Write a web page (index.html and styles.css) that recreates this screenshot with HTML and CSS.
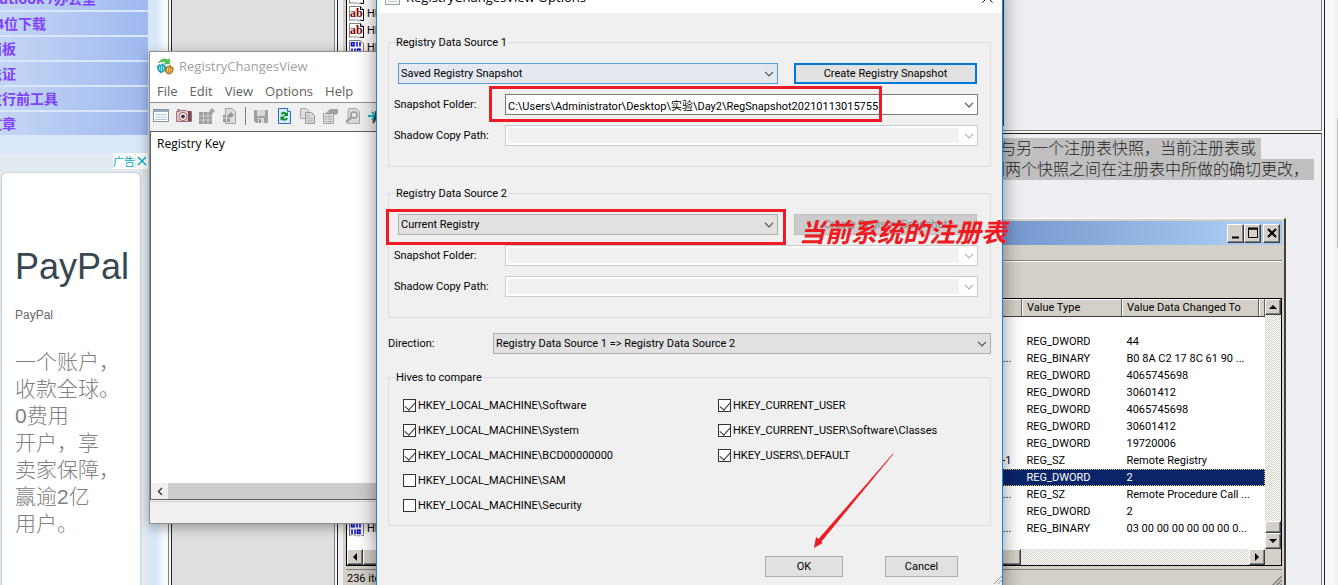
FILE: index.html
```
<!DOCTYPE html>
<html lang="zh-CN">
<head>
  <meta charset="UTF-8" />
  <meta name="viewport" content="width=device-width, initial-scale=1.0" />
  <title>RegistryChangesView</title>
  <link rel="stylesheet" href="styles.css">
</head>
<body>
  <svg width="0" height="0" class="defs">
    <symbol id="chevron" viewBox="0 0 10 6"><path d="M1 .8 5 4.8 9 .8" fill="none" stroke="currentColor" stroke-width="1.2"/></symbol>
    <symbol id="reg-ab" viewBox="0 0 16 16">
      <path d="M.5.5h11l3 3v11h-2l-1-1-2 1.500-2-1.500-2 1-2-1-3 1z" fill="#fff" stroke="#808080"/>
      <path d="M11.500.5v3h3v11h-3" fill="none" stroke="#000"/>
      <text x="1" y="11" font-size="12" font-weight="bold" font-family="Liberation Serif, serif" fill="#800000">ab</text>
    </symbol>
    <symbol id="reg-bin" viewBox="0 0 16 16">
      <path d="M.5.5h11l3 3v11h-2l-1-1-2 1.500-2-1.500-2 1-2-1-3 1z" fill="#fff" stroke="#808080"/>
      <g fill="none" stroke="#0000e0" stroke-width="1.500"><rect x="2.500" y="2.700" width="2.500" height="3"/><path d="M8 2v4.500M11 2v4.500M3 8.500V13M6 8.500V13"/><rect x="8.500" y="9.200" width="2.500" height="3"/></g>
    </symbol>
  </svg>

  <div class="page">
    <aside class="sidebar">
      <ul class="side-menu">
        <li><a href="#">Outlook /办公室</a></li>
        <li><a href="#">64位下载</a></li>
        <li><a href="#">面板</a></li>
        <li><a href="#">法证</a></li>
        <li><a href="#">发行前工具</a></li>
        <li><a href="#">文章</a></li>
      </ul>
      <div class="ad">
        <div class="ad-bar">
          <span>广告</span>
          <button type="button" aria-label="关闭"><svg viewBox="0 0 10 10" width="10" height="10"><path d="M1 1l8 8M9 1l-8 8" stroke="#00a8c8" stroke-width="1.300"/></svg></button>
        </div>
        <div class="ad-card">
          <h2>PayPal</h2>
          <small>PayPal</small>
          <p>一个账户，<br>收款全球。<br>0费用<br>开户，享<br>卖家保障，<br>赢逾2亿<br>用户。</p>
        </div>
      </div>
    </aside>
    <div class="gutter"></div>
    <main class="frame">
      <div class="nav-cell"></div>
      <div class="content">
        <section class="cell cell-top">
          <div class="classic classic-top">
            <div class="reg-list">
              <div class="reg-row"><svg width="16" height="16"><use href="#reg-ab"/></svg>HKEY</div>
              <div class="reg-row"><svg width="16" height="16"><use href="#reg-ab"/></svg>HKEY</div>
              <div class="reg-row"><svg width="16" height="16"><use href="#reg-ab"/></svg>HKEY</div>
              <div class="reg-row"><svg width="16" height="16"><use href="#reg-bin"/></svg>HKEY</div>
            </div>
          </div>
        </section>
        <section class="cell cell-bottom">
          <p class="article"><mark class="first">与另一个注册表快照，当前注册表或</mark><br><mark>到两个快照之间在注册表中所做的确切更改，</mark></p>
          <div class="classic classic-main">
            <div class="classic-title">
              <button type="button" aria-label="Minimize"><svg width="14" height="14"><path d="M3 11.500h7" stroke="#000" stroke-width="2"/></svg></button>
              <button type="button" aria-label="Maximize"><svg width="14" height="14"><path d="M2.500 2v9.500h9V2M2 3h10" fill="none" stroke="#000"/><path d="M2 2.500h10" stroke="#000" stroke-width="2"/></svg></button>
              <button type="button" aria-label="Close" class="close"><svg width="14" height="14"><path d="M3 3l8 8M11 3l-8 8" stroke="#000" stroke-width="2"/></svg></button>
            </div>
            <div class="classic-menu"></div>
            <div class="classic-tools"></div>
            <div class="list-box">
              <div class="list-area">
                <table class="list">
                  <thead>
                    <tr><th class="c-key"></th><th class="c-type">Value Type</th><th class="c-data">Value Data Changed To</th><th></th></tr>
                  </thead>
                  <tbody>
                    <tr><td></td><td></td><td></td><td></td></tr>
                    <tr><td></td><td>REG_DWORD</td><td>44</td><td></td></tr>
                    <tr><td>...</td><td>REG_BINARY</td><td>B0 8A C2 17 8C 61 90 ...</td><td></td></tr>
                    <tr><td></td><td>REG_DWORD</td><td>4065745698</td><td></td></tr>
                    <tr><td></td><td>REG_DWORD</td><td>30601412</td><td></td></tr>
                    <tr><td></td><td>REG_DWORD</td><td>4065745698</td><td></td></tr>
                    <tr><td></td><td>REG_DWORD</td><td>30601412</td><td></td></tr>
                    <tr><td></td><td>REG_DWORD</td><td>19720006</td><td></td></tr>
                    <tr><td>-1</td><td>REG_SZ</td><td>Remote Registry</td><td></td></tr>
                    <tr class="selected"><td></td><td>REG_DWORD</td><td>2</td><td></td></tr>
                    <tr><td>...</td><td>REG_SZ</td><td>Remote Procedure Call ...</td><td></td></tr>
                    <tr><td></td><td>REG_DWORD</td><td>2</td><td></td></tr>
                    <tr><td class="key"><svg width="16" height="16"><use href="#reg-bin"/></svg><span>HKEY</span><i>...</i></td><td>REG_BINARY</td><td>03 00 00 00 00 00 00 0...</td><td></td></tr>
                  </tbody>
                </table>
                <div class="v-scroll">
                  <button type="button" aria-label="Up"><svg width="8" height="4"><path d="M0 4l4-4 4 4z"/></svg></button>
                  <div class="track"></div>
                  <div class="thumb"></div>
                  <button type="button" aria-label="Down"><svg width="8" height="4"><path d="M0 0l4 4 4-4z"/></svg></button>
                </div>
              </div>
              <div class="h-scroll">
                <button type="button" aria-label="Left"><svg width="4" height="8"><path d="M4 0L0 4l4 4z"/></svg></button>
                <div class="thumb"></div>
                <div class="track"></div>
                <button type="button" aria-label="Right"><svg width="4" height="8"><path d="M0 0l4 4-4 4z"/></svg></button>
                <div class="corner"></div>
              </div>
            </div>
            <div class="classic-status">
              <span>236 item(s)</span>
              <svg width="12" height="12"><path d="M1 12L12 1M5 12l7-7M9 12l3-3" stroke="#808080" stroke-width="1.500"/></svg>
            </div>
          </div>
        </section>
      </div>
    </main>
    <div class="page-scroll"><div class="page-thumb"></div></div>
  </div>

  <div class="window">
    <div class="window-title">
      <svg width="17" height="17" viewBox="0 0 17 17">
        <path d="M1.500 5C3 1 8 0 11 2l1.500-1.500V6H7.500L9 4.200C6.500 3 3.500 3.500 1.500 5z" fill="#4cc84c" stroke="#2c9c3c" stroke-width=".5"/>
        <path d="M.5 8l2-1.500L4 7.500 5.500 5.500 7 7l1.500 1-.5 3.500L6 14l-3 .5-2-2.500z" fill="#22b4c4" stroke="#0c7888" stroke-width=".7"/>
        <path d="M2.500 8.500v3.500M4.500 8v5M6.500 8.500V12" stroke="#90f4ff" stroke-width=".8"/>
        <path d="M8.500 10l1.500-1.500 1.500.5 1.500-2 1 2 2 .5v3.500l-2 2.500-3 .5-2.500-2z" fill="#d08c20" stroke="#7c5010" stroke-width=".7"/>
        <path d="M10.500 10v4M12.500 10v5M14.500 10.500v3" stroke="#ffd47c" stroke-width=".8"/>
      </svg>
      RegistryChangesView
    </div>
    <nav class="window-menu">
      <a href="#">File</a><a href="#">Edit</a><a href="#">View</a><a href="#">Options</a><a href="#">Help</a>
    </nav>
    <div class="toolbar">
      <button type="button" aria-label="Options"><svg width="16" height="16"><rect x=".5" y="1.500" width="15" height="12" fill="#fff" stroke="#8494a4"/><path d="M1 3h14" stroke="#9aabb8" stroke-width="2"/><path d="M2 6.500h12M2 9h12M2 11.500h12" stroke="#a8cce8"/></svg></button>
      <button type="button" aria-label="Snapshot"><svg width="16" height="16"><path d="M.5 3.500h3l1-1h6l1 1h4v10H.5z" fill="#e8c4c8" stroke="#a07078"/><path d="M12 3h3v10h-3z" fill="#744850"/><circle cx="7" cy="8.500" r="4" fill="#fff" stroke="#906068"/><circle cx="7" cy="8.500" r="2" fill="#503040"/><path d="M1 2h3" stroke="#503040"/></svg></button>
      <button type="button" aria-label="Compare" disabled><svg width="16" height="16"><path d="M0 4h13v12H0z" fill="#9c9c9c"/><path d="M0 8h13M0 12h13M4.500 4v12M9 4v12" stroke="#d0d0d0"/><path d="M13 0l3 3-3 3-3-3z" fill="#a8a8a8"/></svg></button>
      <button type="button" aria-label="Export" disabled><svg width="16" height="16"><path d="M3.500.5h7l3 3v12h-10z" fill="#ddd" stroke="#a0a0a0"/><path d="M1 7h7v7H1zM9 4l3 3-3 3-3-3z" fill="#999"/><path d="M1 10h7M4.500 7v7" stroke="#ddd"/></svg></button>
      <span class="separator"></span>
      <button type="button" aria-label="Save" disabled><svg width="16" height="16"><path d="M1 2h14v13H3l-2-2z" fill="#a0a0a0"/><path d="M4 2h8v6H4zM5 10h6v5H5z" fill="#d8d8d8"/><path d="M6 11h2v4H6z" fill="#909090"/></svg></button>
      <button type="button" aria-label="Refresh"><svg width="16" height="16"><path d="M2.500.5h9l3 3v12h-12z" fill="#d8ecff" stroke="#3468b8"/><path d="M11.500.5v3h3" fill="#fff" stroke="#3468b8"/><path d="M5.500 6.500c1-2.500 5-2 4.500.5M11 10c-1 2.500-5 2-4.500-.5" fill="none" stroke="#089020" stroke-width="2"/><path d="M7 8h5V4zM9.500 8.500h-5v4z" fill="#089020"/></svg></button>
      <button type="button" aria-label="Copy" disabled><svg width="16" height="16"><path d="M1.500.5h6l2 2v8h-8z" fill="#ddd" stroke="#a8a8a8"/><path d="M6.500 4.500h6l3 3v8h-9z" fill="#d8d8d8" stroke="#989898"/><path d="M8 8h3M8 10.500h6M8 13h6" stroke="#b0b0b0"/></svg></button>
      <button type="button" aria-label="Properties" disabled><svg width="16" height="16"><path d="M1.500 5.500h10v10h-10z" fill="#ddd" stroke="#a0a0a0"/><path d="M3 8.500h2M6 8.500h4M3 11h2M6 11h4M3 13.500h2M6 13.500h4" stroke="#a0a0a0"/><path d="M4 5l4-4h8v5l-4 1-3-2-2 2z" fill="#a0a0a0"/></svg></button>
      <button type="button" aria-label="Find" disabled><svg width="16" height="16"><path d="M3.500.5h8l3 3v12h-12z" fill="#d8d8d8" stroke="#a8a8a8"/><circle cx="9" cy="7" r="3" fill="#e8e8e8" stroke="#989898" stroke-width="1.500"/><path d="M7 9l-6 5" stroke="#989898" stroke-width="2"/></svg></button>
      <button type="button" aria-label="Exit"><svg width="16" height="16"><path d="M0 8h6M4 4l4 4-4 4" fill="none" stroke="#00b8d8" stroke-width="2"/><path d="M8 3v7l-3 5M8 9l4 6" stroke="#604020" stroke-width="2"/></svg></button>
    </div>
    <div class="window-list">
      <div class="list-head">Registry Key</div>
      <div class="list-scroll"><button type="button" aria-label="Left"><svg width="6" height="9"><path d="M5 1L1.500 4.500 5 8" fill="none" stroke="#404040" stroke-width="1.500"/></svg></button></div>
    </div>
    <div class="window-status"></div>
  </div>

  <form class="dialog">
    <div class="dialog-title">
      <svg width="15" height="15"><rect x=".5" y=".5" width="14" height="14" fill="#f4f8f4" stroke="#a0a0a0"/><path d="M1 2.500h13" stroke="#a8b8c8" stroke-width="3"/><path d="M3 11.500h9" stroke="#c0d0c0"/></svg>
      <span>RegistryChangesView Options</span>
      <button type="button" aria-label="Close"><svg width="11" height="11"><path d="M.5.5l10 10M10.500.5l-10 10" stroke="#000"/></svg></button>
    </div>
    <div class="dialog-body">
      <fieldset>
        <legend>Registry Data Source 1</legend>
        <div class="row source-row">
          <span class="combo focus"><select aria-label="Registry Data Source 1"><option>Saved Registry Snapshot</option></select><svg><use href="#chevron"/></svg></span>
          <button type="button" class="btn default">Create Registry Snapshot</button>
        </div>
        <div class="row">
          <label for="folder1">Snapshot Folder:</label>
          <span class="combo edit"><input id="folder1" type="text" value="C:\Users\Administrator\Desktop\实验\Day2\RegSnapshot20210113015755"><svg><use href="#chevron"/></svg></span>
        </div>
        <div class="row">
          <label for="shadow1">Shadow Copy Path:</label>
          <span class="combo off"><select id="shadow1" disabled></select><svg><use href="#chevron"/></svg></span>
        </div>
      </fieldset>
      <fieldset>
        <legend>Registry Data Source 2</legend>
        <div class="row source-row">
          <span class="combo"><select aria-label="Registry Data Source 2"><option>Current Registry</option></select><svg><use href="#chevron"/></svg></span>
          <button type="button" class="btn" disabled>Create Registry Snapshot</button>
        </div>
        <div class="row">
          <label for="folder2">Snapshot Folder:</label>
          <span class="combo off"><select id="folder2" disabled></select><svg><use href="#chevron"/></svg></span>
        </div>
        <div class="row">
          <label for="shadow2">Shadow Copy Path:</label>
          <span class="combo off"><select id="shadow2" disabled></select><svg><use href="#chevron"/></svg></span>
        </div>
      </fieldset>
      <div class="row direction">
        <label for="direction">Direction:</label>
        <span class="combo"><select id="direction"><option>Registry Data Source 1 =&gt; Registry Data Source 2</option></select><svg><use href="#chevron"/></svg></span>
      </div>
      <fieldset class="hives">
        <legend>Hives to compare</legend>
        <div class="hive-grid">
          <div>
            <label><input type="checkbox" checked>HKEY_LOCAL_MACHINE\Software</label>
            <label><input type="checkbox" checked>HKEY_LOCAL_MACHINE\System</label>
            <label><input type="checkbox" checked>HKEY_LOCAL_MACHINE\BCD00000000</label>
            <label><input type="checkbox">HKEY_LOCAL_MACHINE\SAM</label>
            <label><input type="checkbox">HKEY_LOCAL_MACHINE\Security</label>
          </div>
          <div>
            <label><input type="checkbox" checked>HKEY_CURRENT_USER</label>
            <label><input type="checkbox" checked>HKEY_CURRENT_USER\Software\Classes</label>
            <label><input type="checkbox" checked>HKEY_USERS\.DEFAULT</label>
          </div>
        </div>
      </fieldset>
      <div class="actions">
        <button type="button" class="btn ok">OK</button>
        <button type="button" class="btn cancel">Cancel</button>
      </div>
    </div>
    <svg class="grip" width="8" height="8"><path d="M0 8l8-8M4 8l4-4" stroke="#909090"/></svg>
  </form>

  <!-- red notes drawn over the windows -->
  <div class="note-box note-folder"></div>
  <div class="note-box note-current"></div>
  <div class="note-text">当前系统的注册表</div>
  <svg class="note-arrow" width="82" height="96"><path d="M79.500 1L7.500 88.500l1 1.500L0 95l2-11 2.500 2L79 .5z" fill="#ed1c24"/></svg>
</body>
</html>
```

FILE: styles.css
```
* {
  box-sizing: border-box;
}
body {
  margin: 0;
  height: 100vh;
  overflow: hidden;
  position: relative;
  background: #f8f8f8;
  font-family: Roboto, "Noto Sans CJK SC", sans-serif;
  font-size: 11px;
  color: #000;
}
button, input, select {
  font: inherit;
  color: inherit;
  margin: 0;
  padding: 0;
}
a {
  text-decoration: none;
  color: inherit;
}
.defs {
  position: absolute;
}

/* page behind the windows */
.page {
  display: flex;
  height: 100vh;
  overflow: hidden;
}
.sidebar {
  width: 148px;
  flex: none;
  display: flex;
  flex-direction: column;
  background: #d8e8f8;
  overflow: hidden;
}
.side-menu {
  list-style: none;
  margin: -13px 0 18px -16px;
  padding: 0;
  display: flex;
  flex-direction: column;
  gap: 2px;
}
.side-menu li {
  height: 23px;
  padding-left: 4px;
  line-height: 23px;
  font-size: 14px;
  font-weight: bold;
  font-family: "Noto Sans", "Noto Sans CJK SC", sans-serif;
  color: #7f40ff;
  background: linear-gradient(to right, #c8daf4, #a0b8f0);
}
.ad {
  flex: 1;
  background: #e2eaf1;
}
.ad-bar {
  display: flex;
  justify-content: flex-end;
  gap: 1px;
  height: 16px;
  margin-bottom: 4px;
}
.ad-bar span,
.ad-bar button {
  display: flex;
  align-items: center;
  background: #fff;
  border: 0;
  padding: 0;
  font-size: 11px;
  color: #00a8c8;
}
.ad-bar button {
  padding: 0 1px;
}
.ad-card {
  height: 100%;
  margin: 0 8px 0 2px;
  padding: 74px 0 0 13px;
  background: #fff;
  border-radius: 5px;
  box-shadow: 0 0 2px #8fa0b0;
  font-family: "Liberation Sans", "Noto Sans CJK SC", sans-serif;
}
.ad-card h2 {
  margin: 0 0 20px;
  font-size: 36px;
  line-height: 40px;
  font-weight: normal;
  color: #37474f;
}
.ad-card small {
  display: block;
  font-size: 12px;
  line-height: 16px;
  color: #666;
}
.ad-card p {
  margin: 25px 0 0;
  font-size: 21px;
  line-height: 27px;
  font-weight: 300;
  color: #808080;
  white-space: nowrap;
}
.gutter {
  width: 20px;
  flex: none;
  background: linear-gradient(to right, #d8e8f8 8px, #f8f8f8 16px);
}
.frame {
  flex: 1;
  display: flex;
  gap: 2px;
  border-left: 1px solid #808080;
  border-right: 1px solid #202020;
  padding: 0 2px;
  min-width: 0;
}
.nav-cell {
  width: 164px;
  flex: none;
  background: #dfdfdf;
  border-left: 1px solid #202020;
  border-right: 1px solid #808080;
}
.content {
  flex: 1;
  min-width: 0;
  display: flex;
  flex-direction: column;
  gap: 2px;
}
.cell {
  background: #efeef3;
  border-left: 1px solid #202020;
  border-right: 1px solid #808080;
  padding-left: 5px;
}
.cell-top {
  height: 131px;
  flex: none;
  overflow: hidden;
  border-bottom: 1px solid #808080;
}
.cell-bottom {
  flex: 1;
  border-top: 1px solid #202020;
}
.article {
  margin: 4px 0 38px;
  padding-left: 646px;
  font-size: 16px;
  line-height: 21px;
  font-weight: 300;
  color: #222;
  white-space: nowrap;
}
.article mark {
  display: inline-block;
  background: #c0c0c0;
  color: inherit;
  padding-right: 5px;
}
.article .first {
  padding-left: 11px;
}

/* classic style window */
.classic {
  background: #d4d0c8;
  border: 1px solid #d4d0c8;
  border-right: 2px solid #404040;
}
.classic-top {
  width: 661px;
  height: 126px;
  padding-left: 2px;
  border-top: 0;
  border-bottom: 1px solid #404040;
}
.reg-list {
  display: flex;
  flex-direction: column;
  height: 100%;
  border-left: 1px solid #000;
  background: #fff;
  padding-left: 2px;
}
.reg-row {
  display: flex;
  align-items: center;
  gap: 2px;
  height: 17px;
  flex: none;
  white-space: nowrap;
}
.reg-row:first-child {
  margin-top: -12px;
}
.classic-main {
  width: 943px;
  padding: 2px 2px 0;
  border-top-color: #fff;
}
.classic-title {
  height: 24px;
  display: flex;
  justify-content: flex-end;
  align-items: center;
  padding-right: 2px;
  background: linear-gradient(to right, #0a246a, #7294cc 69%, #a6caf0 95%);
}
.classic button,
.thumb {
  display: flex;
  align-items: center;
  justify-content: center;
  background: #d4d0c8;
  border: 1px solid #fff;
  border-right: 1px solid #404040;
  border-bottom: 1px solid #404040;
  border-radius: 0;
  box-shadow: inset -1px -1px #808080;
}
.classic-title button {
  width: 17px;
  height: 19px;
}
.classic-title .close {
  margin-left: 2px;
}
.classic-menu {
  height: 16px;
  border-bottom: 1px solid #808080;
}
.classic-tools {
  height: 37px;
  border-top: 1px solid #fff;
}
.list-box {
  border: 1px solid #000;
}
.list-area {
  display: flex;
  height: 250px;
  background: #fff;
}
.list {
  flex: 1;
  align-self: flex-start;
  border-collapse: collapse;
  table-layout: fixed;
  background: #fff;
  white-space: nowrap;
}
.list th {
  height: 17px;
  padding: 0 0 0 5px;
  text-align: left;
  font-weight: normal;
  line-height: 15px;
  background: #d4d0c8;
  border-right: 1px solid #606060;
  border-bottom: 1px solid #404040;
  box-shadow: inset 1px 1px #fff;
}
.list .c-key {
  width: 675px;
}
.list .c-type {
  width: 100px;
}
.list .c-data {
  width: 137px;
}
.list td {
  height: 17px;
  padding: 0 0 0 5px;
  line-height: 17px;
}
.list td:first-child {
  text-align: right;
  padding: 0 10px 0 2px;
}
.list .key {
  display: flex;
  align-items: center;
  gap: 2px;
}
.list .key i {
  margin-left: auto;
  font-style: normal;
}
.list .selected {
  background: #0a246a;
  color: #fff;
  outline: 1px dotted #d8c870;
  outline-offset: -1px;
}
.v-scroll {
  width: 16px;
  display: flex;
  flex-direction: column;
}
.v-scroll button {
  height: 16px;
}
.track {
  flex: 1;
  background: repeating-conic-gradient(#fff 0 25%, #d4d0c8 0 50%) 0 0 / 2px 2px;
}
.v-scroll .thumb {
  height: 12px;
}
.h-scroll {
  display: flex;
  height: 16px;
}
.h-scroll button {
  width: 16px;
}
.h-scroll .thumb {
  width: 658px;
}
.h-scroll .corner {
  width: 16px;
}
.classic-status {
  display: flex;
  justify-content: space-between;
  align-items: flex-end;
  height: 18px;
  margin-top: 3px;
  padding-left: 1px;
  border-top: 1px solid #808080;
  line-height: 17px;
}

/* RegistryChangesView main window */
.window {
  position: absolute;
  left: 149px;
  top: 51px;
  width: 300px;
  height: 473px;
  display: flex;
  flex-direction: column;
  background: #f0f0f0;
  border: 1px solid #909090;
  box-shadow: 0 3px 12px rgba(0, 0, 0, 0.35);
}
.window-title {
  display: flex;
  align-items: center;
  gap: 5px;
  height: 28px;
  padding-left: 7px;
  background: #fff;
  font-family: "Open Sans", sans-serif;
  font-size: 13px;
  color: #a0a0a0;
}
.window-menu {
  display: flex;
  gap: 12px;
  height: 23px;
  padding-left: 7px;
  line-height: 22px;
  background: #fff;
  border-bottom: 1px solid #909090;
  font-family: "Open Sans", sans-serif;
  font-size: 13px;
  color: #606060;
}
.toolbar {
  display: flex;
  align-items: center;
  gap: 7px;
  height: 28px;
  padding: 0 0 3px 3px;
}
.toolbar button {
  display: flex;
  border: 0;
  background: none;
}
.separator {
  width: 1px;
  height: 18px;
  background: #808080;
}
.window-list {
  flex: 1;
  display: flex;
  flex-direction: column;
  justify-content: space-between;
  background: #fff;
  border: 1px solid #606060;
  border-right: 0;
}
.list-head {
  padding: 2px 6px;
  font-family: "Open Sans", sans-serif;
  font-size: 12px;
  line-height: 20px;
}
.list-scroll {
  height: 16px;
  background: #cdcdcd;
}
.list-scroll button {
  width: 17px;
  height: 16px;
  display: flex;
  align-items: center;
  justify-content: center;
  border: 0;
  background: #f0f0f0;
}
.window-status {
  height: 22px;
  margin-top: 1px;
  border-top: 1px solid #d0d0d0;
}

/* options dialog */
.dialog {
  position: absolute;
  left: 376px;
  top: -18px;
  width: 627px;
  bottom: -8px;
  background: #f0f0f0;
  border: 1px solid #1883d7;
  box-shadow: 0 6px 18px rgba(0, 0, 0, 0.45);
}
.dialog-title {
  display: flex;
  align-items: center;
  gap: 6px;
  height: 30px;
  padding: 0 9px 2px 8px;
  background: #fff;
  font-family: "Open Sans", sans-serif;
  font-size: 13px;
}
.dialog-title button {
  display: flex;
  margin-left: auto;
  border: 0;
  background: none;
}
.dialog-body {
  padding: 22px 11px 0;
}
fieldset {
  display: flex;
  flex-direction: column;
  gap: 10px;
  margin: 0 0 19px;
  padding: 13px 12px 20px 5px;
  border: 1px solid #dcdcdc;
  min-width: 0;
}
legend {
  margin-left: 1px;
  padding: 0 1px;
  line-height: 15px;
}
.row {
  display: flex;
  align-items: center;
  height: 21px;
}
.row label {
  width: 111px;
  flex: none;
}
.source-row {
  gap: 16px;
  padding: 0 1px 0 4px;
}
.combo {
  position: relative;
  flex: 1;
  display: flex;
  height: 21px;
}
.combo select,
.combo input {
  appearance: none;
  width: 100%;
  padding: 0 20px 0 2px;
  border: 1px solid #adadad;
  border-radius: 0;
  background: #e1e1e1;
  opacity: 1;
  outline: 0;
}
.combo svg {
  position: absolute;
  right: 4px;
  top: 8px;
  width: 10px;
  height: 6px;
  color: #505050;
  pointer-events: none;
}
.combo.focus select {
  background: #e3e8f1;
  border-color: #569de5;
}
.combo.edit input {
  background: #fff;
  border-color: #7a7a7a;
}
.combo.off select {
  border-color: #ccc;
  background: linear-gradient(to left, #fff 18px, #f0f0f0 18px);
  box-shadow: inset 0 0 0 2px #fff;
}
.combo.off svg {
  color: #b0b0b0;
}
.btn {
  height: 21px;
  background: #e1e1e1;
  border: 1px solid #adadad;
}
.source-row .btn {
  width: 183px;
}
.btn.default {
  border: 2px solid #0078d7;
}
.btn:disabled {
  background: #ccc;
  border-color: #bfbfbf;
  color: #838383;
}
.direction {
  margin: -4px 0 16px;
}
.direction label {
  width: 105px;
}
.hives {
  margin-bottom: 30px;
  padding: 8px 12px 7px 5px;
}
.hive-grid {
  display: grid;
  grid-template-columns: 315px 1fr;
  padding-left: 9px;
}
.hive-grid label {
  display: flex;
  align-items: center;
  gap: 2px;
  height: 25px;
}
.hive-grid input {
  appearance: none;
  display: flex;
  justify-content: center;
  width: 13px;
  height: 13px;
  border: 1px solid #333;
  background: #fff;
}
.hive-grid input:checked::after {
  content: "";
  width: 5px;
  height: 9px;
  border: solid #333;
  border-width: 0 1px 1px 0;
  transform: rotate(42deg);
}
.actions {
  display: flex;
  justify-content: flex-end;
  gap: 42px;
  padding-right: 33px;
}
.actions .ok {
  width: 78px;
}
.actions .cancel {
  width: 73px;
}
.grip {
  position: absolute;
  right: 0;
  bottom: 8px;
}

/* red notes */
.note-box {
  position: absolute;
  border: 3px solid #ed1c24;
}
.note-folder {
  left: 489px;
  top: 86px;
  width: 393px;
  height: 36px;
}
.note-current {
  left: 386px;
  top: 209px;
  width: 400px;
  height: 36px;
}
.note-text {
  position: absolute;
  left: 799px;
  top: 213px;
  font-family: "Noto Sans CJK SC", sans-serif;
  font-size: 26px;
  line-height: 36px;
  font-weight: bold;
  font-style: italic;
  color: #ed1c24;
  white-space: nowrap;
}
.note-arrow {
  position: absolute;
  left: 814px;
  top: 453px;
}

/* page scrollbar */
.page-scroll {
  width: 13px;
  flex: none;
  padding-top: 118px;
  background: linear-gradient(to right, #f8f8f8 10px, #f0f0f0 10px);
}
.page-thumb {
  width: 1px;
  height: 130px;
  margin-left: auto;
  background: #c0c0c0;
}
```
